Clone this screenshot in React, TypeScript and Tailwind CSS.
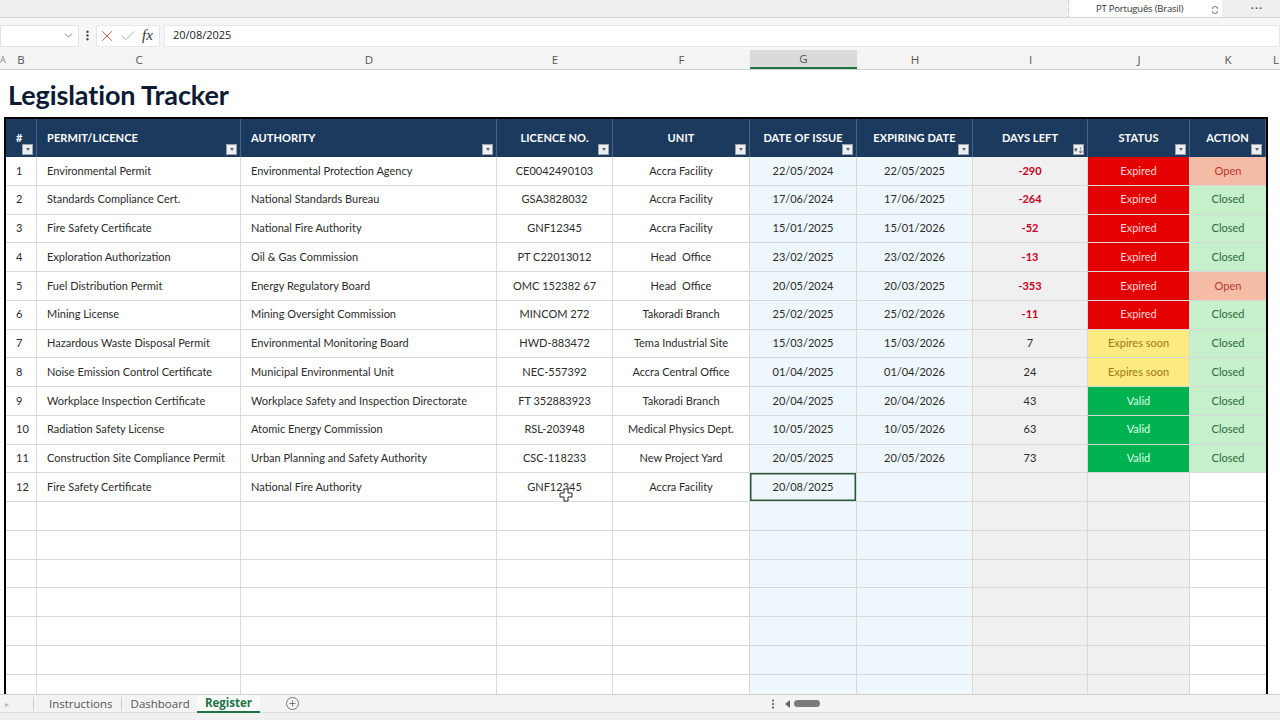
import { Check, ChevronDown, EllipsisVertical, Plus, X } from "lucide-react";

type Row = {
  n: number;
  permit: string;
  authority: string;
  licence: string;
  unit: string;
  issued: string;
  expires: string;
  days: number | null;
  status: "Expired" | "Expires soon" | "Valid" | null;
  action: "Open" | "Closed" | null;
};

const rows: Row[] = [
  { n: 1, permit: "Environmental Permit", authority: "Environmental Protection Agency", licence: "CE0042490103", unit: "Accra Facility", issued: "22/05/2024", expires: "22/05/2025", days: -290, status: "Expired", action: "Open" },
  { n: 2, permit: "Standards Compliance Cert.", authority: "National Standards Bureau", licence: "GSA3828032", unit: "Accra Facility", issued: "17/06/2024", expires: "17/06/2025", days: -264, status: "Expired", action: "Closed" },
  { n: 3, permit: "Fire Safety Certificate", authority: "National Fire Authority", licence: "GNF12345", unit: "Accra Facility", issued: "15/01/2025", expires: "15/01/2026", days: -52, status: "Expired", action: "Closed" },
  { n: 4, permit: "Exploration Authorization", authority: "Oil & Gas Commission", licence: "PT C22013012", unit: "Head\u00a0 Office", issued: "23/02/2025", expires: "23/02/2026", days: -13, status: "Expired", action: "Closed" },
  { n: 5, permit: "Fuel Distribution Permit", authority: "Energy Regulatory Board", licence: "OMC 152382 67", unit: "Head\u00a0 Office", issued: "20/05/2024", expires: "20/03/2025", days: -353, status: "Expired", action: "Open" },
  { n: 6, permit: "Mining License", authority: "Mining Oversight Commission", licence: "MINCOM 272", unit: "Takoradi Branch", issued: "25/02/2025", expires: "25/02/2026", days: -11, status: "Expired", action: "Closed" },
  { n: 7, permit: "Hazardous Waste Disposal Permit", authority: "Environmental Monitoring Board", licence: "HWD-883472", unit: "Tema Industrial Site", issued: "15/03/2025", expires: "15/03/2026", days: 7, status: "Expires soon", action: "Closed" },
  { n: 8, permit: "Noise Emission Control Certificate", authority: "Municipal Environmental Unit", licence: "NEC-557392", unit: "Accra Central Office", issued: "01/04/2025", expires: "01/04/2026", days: 24, status: "Expires soon", action: "Closed" },
  { n: 9, permit: "Workplace Inspection Certificate", authority: "Workplace Safety and Inspection Directorate", licence: "FT 352883923", unit: "Takoradi Branch", issued: "20/04/2025", expires: "20/04/2026", days: 43, status: "Valid", action: "Closed" },
  { n: 10, permit: "Radiation Safety License", authority: "Atomic Energy Commission", licence: "RSL-203948", unit: "Medical Physics Dept.", issued: "10/05/2025", expires: "10/05/2026", days: 63, status: "Valid", action: "Closed" },
  { n: 11, permit: "Construction Site Compliance Permit", authority: "Urban Planning and Safety Authority", licence: "CSC-118233", unit: "New Project Yard", issued: "20/05/2025", expires: "20/05/2026", days: 73, status: "Valid", action: "Closed" },
  { n: 12, permit: "Fire Safety Certificate", authority: "National Fire Authority", licence: "GNF12345", unit: "Accra Facility", issued: "20/08/2025", expires: "", days: null, status: null, action: null },
];

const statusClass: Record<string, string> = {
  Expired: "bg-[#e50000] text-[#ffd9d9]",
  "Expires soon": "bg-[#fdeb82] text-[#a07a12]",
  Valid: "bg-[#00b350] text-[#dcffe6]",
};

const actionClass: Record<string, string> = {
  Open: "bg-[#f4bba5] text-[#b8392c]",
  Closed: "bg-[#c6f0cb] text-[#2f6a37]",
};

const letters = [
  { l: "B", w: "w-[32px]", align: "justify-center" },
  { l: "C", w: "w-[204px]", align: "justify-center" },
  { l: "D", w: "w-[256px]", align: "justify-center" },
  { l: "E", w: "w-[116px]", align: "justify-center" },
  { l: "F", w: "w-[137px]", align: "justify-center" },
  { l: "G", w: "w-[107px]", align: "justify-center" },
  { l: "H", w: "w-[116px]", align: "justify-center" },
  { l: "I", w: "w-[115px]", align: "justify-center" },
  { l: "J", w: "w-[102px]", align: "justify-center" },
  { l: "K", w: "w-[76px]", align: "justify-center" },
  { l: "L", w: "w-[14px]", align: "justify-end pr-[1px]" },
];

const cell = "h-full shrink-0 flex items-center border-r border-b border-[#d9d9d9] truncate";

function FilterBtn({ sort }: { sort?: boolean }) {
  return (
    <span className="absolute right-[3px] bottom-[2px] flex h-[11px] w-[11px] items-center justify-center border border-[#9aa3ad] bg-[#eceff2]">
      {sort ? (
        <span className="text-[7px] leading-none text-[#555]">▾↓</span>
      ) : (
        <span className="block h-0 w-0 border-x-[2.5px] border-t-[3px] border-x-transparent border-t-[#666]" />
      )}
    </span>
  );
}

function HeadCell({ label, w, left, sort }: { label: string; w: string; left?: boolean; sort?: boolean }) {
  return (
    <div
      className={`relative flex h-full shrink-0 items-center border-r border-[#4a6284] ${w} ${
        left ? "justify-start pl-[10px]" : "justify-center"
      }`}
    >
      <span className="text-[11px] font-bold tracking-[0.1px] text-white">{label}</span>
      <FilterBtn sort={sort} />
    </div>
  );
}

export default function App() {
  const empties = Array.from({ length: 7 });
  return (
    <div className="relative h-[720px] w-[1280px] overflow-hidden bg-white font-['Lato','Noto_Sans',sans-serif] text-[#2b2b2b]">
      {/* ribbon strip */}
      <div className="flex h-[18px] items-start justify-end border-b border-[#d6d6d6] bg-[#efefef] font-['Open_Sans',sans-serif]">
        <div className="flex h-[17px] w-[154px] items-center border-l border-dotted border-[#bdbdbd] bg-white pl-[27px] pr-[4px] pt-[2px]">
          <span className="text-[9.5px] tracking-[-0.2px] text-[#333]">PT Português (Brasil)</span>
          <span className="ml-auto flex flex-col gap-[2px]">
            <span className="block h-[3px] w-[6px] rounded-t-sm border border-b-0 border-[#888]" />
            <span className="block h-[3px] w-[6px] rounded-b-sm border border-t-0 border-[#888]" />
          </span>
        </div>
        <div className="flex h-[17px] w-[58px] items-center justify-center pl-[12px] text-[11px] font-bold tracking-[1px] text-[#555]">
          ···
        </div>
      </div>

      {/* formula bar */}
      <div className="flex h-[32px] items-center bg-[#f6f6f6] pt-[3px] font-['Open_Sans',sans-serif]">
        <div className="flex h-[22px] w-[79px] items-center justify-end border border-[#e2e2e2] bg-white pr-[3px]">
          <ChevronDown className="h-[13px] w-[13px] text-[#666]" strokeWidth={1.5} />
        </div>
        <EllipsisVertical className="ml-[2px] h-[13px] w-[13px] text-[#444]" strokeWidth={2.5} />
        <div className="ml-[2px] flex h-[22px] w-[64px] items-center gap-[3px] border border-[#e6e6e6] bg-white pl-[1px]">
          <X className="h-[18px] w-[18px] text-[#c64b4b]" strokeWidth={1.2} />
          <Check className="h-[18px] w-[18px] text-[#7cbf83]" strokeWidth={1.2} />
          <span className="ml-[2px] font-['Liberation_Serif',serif] text-[15px] italic leading-none text-[#333]">fx</span>
        </div>
        <div className="ml-[4px] flex h-[22px] flex-1 items-center border border-[#e6e6e6] bg-white pl-[8px] text-[11px] text-[#222]">
          20/08/2025
        </div>
      </div>

      {/* column letters */}
      <div className="flex h-[20px] border-b border-[#d4d4d4] bg-[#f4f4f4] font-['Open_Sans',sans-serif] text-[11.5px] text-[#555]">
        <div className="flex w-[5px] shrink-0 items-center overflow-visible">
          <span className="text-[9px] text-[#888]">A</span>
        </div>
        {letters.map((c) => (
          <div
            key={c.l}
            className={`flex shrink-0 items-center overflow-hidden ${c.w} ${c.align} ${
              c.l === "G" ? "border-b-2 border-[#217346] bg-[#dadada]" : ""
            }`}
          >
            {c.l}
          </div>
        ))}
      </div>

      {/* title */}
      <div className="h-[47px] pl-[8px] pt-[11px]">
        <h1 className="text-[27px] font-bold leading-[27px] tracking-[-0.1px] text-[#0d1a33]">
          Legislation Tracker
        </h1>
      </div>

      {/* table */}
      <div className="ml-[4px] h-[577px] w-[1264px] overflow-hidden border-x-2 border-t-2 border-black">
        <div className="flex h-[38px] bg-[#1c3a5e]">
          <HeadCell label="#" w="w-[31px]" left />
          <HeadCell label="PERMIT/LICENCE" w="w-[204px]" left />
          <HeadCell label="AUTHORITY" w="w-[256px]" left />
          <HeadCell label="LICENCE NO." w="w-[116px]" />
          <HeadCell label="UNIT" w="w-[137px]" />
          <HeadCell label="DATE OF ISSUE" w="w-[107px]" />
          <HeadCell label="EXPIRING DATE" w="w-[116px]" />
          <HeadCell label="DAYS LEFT" w="w-[115px]" sort />
          <HeadCell label="STATUS" w="w-[102px]" />
          <HeadCell label="ACTION" w="w-[76px]" />
        </div>

        <div className="text-[11px]">
          {rows.map((r) => (
            <div key={r.n} className="flex h-[28.75px]">
              <div className={`${cell} w-[31px] pl-[10px]`}>{r.n}</div>
              <div className={`${cell} w-[204px] pl-[10px]`}>{r.permit}</div>
              <div className={`${cell} w-[256px] pl-[10px]`}>{r.authority}</div>
              <div className={`${cell} w-[116px] justify-center`}>{r.licence}</div>
              <div className={`${cell} w-[137px] justify-center`}>{r.unit}</div>
              <div
                className={`${cell} w-[107px] justify-center bg-[#eef7fb] ${
                  r.n === 12 ? "shadow-[inset_0_0_0_1.5px_#2a5a3c]" : ""
                }`}
              >
                {r.issued}
              </div>
              <div className={`${cell} w-[116px] justify-center bg-[#eef7fb]`}>{r.expires}</div>
              <div
                className={`${cell} w-[115px] justify-center bg-[#f0f0f0] ${
                  r.days !== null && r.days < 0 ? "font-bold text-[#c8001e]" : ""
                }`}
              >
                {r.days ?? ""}
              </div>
              <div className={`${cell} w-[102px] justify-center ${r.status ? statusClass[r.status] : "bg-[#f0f0f0]"}`}>
                {r.status ?? ""}
              </div>
              <div className={`${cell} w-[76px] justify-center border-r-0 ${r.action ? actionClass[r.action] : "bg-white"}`}>
                {r.action ?? ""}
              </div>
            </div>
          ))}
          {empties.map((_, i) => (
            <div key={i} className="flex h-[28.75px]">
              <div className={`${cell} w-[31px]`} />
              <div className={`${cell} w-[204px]`} />
              <div className={`${cell} w-[256px]`} />
              <div className={`${cell} w-[116px]`} />
              <div className={`${cell} w-[137px]`} />
              <div className={`${cell} w-[107px] bg-[#eef7fb]`} />
              <div className={`${cell} w-[116px] bg-[#eef7fb]`} />
              <div className={`${cell} w-[115px] bg-[#f0f0f0]`} />
              <div className={`${cell} w-[102px] bg-[#f0f0f0]`} />
              <div className={`${cell} w-[76px] border-r-0`} />
            </div>
          ))}
        </div>
      </div>

      {/* sheet tabs */}
      <div className="flex h-[18px] items-center border-t border-[#cfcfcf] bg-[#f3f3f3] font-['Open_Sans',sans-serif] text-[11.5px] text-[#555]">
        <div className="flex w-[33px] items-center pl-[5px] text-[8px] text-[#bbb]">▸</div>
        <div className="flex h-[14px] items-center border-l border-[#cfcfcf] pl-[15px] pr-[8px]">Instructions</div>
        <div className="flex h-[14px] items-center border-l border-[#cfcfcf] pl-[9px] pr-[7px]">Dashboard</div>
        <div className="flex h-[18px] items-center border-b-2 border-[#217346] bg-[#fafafa] px-[8px] font-bold text-[#217346]">
          Register
        </div>
        <div className="ml-[26px] flex h-[13px] w-[13px] items-center justify-center rounded-full border border-[#777]">
          <Plus className="h-[9px] w-[9px] text-[#555]" strokeWidth={2} />
        </div>
        <EllipsisVertical className="ml-[468px] h-[12px] w-[12px] text-[#666]" strokeWidth={2.5} />
        <span className="ml-[6px] block h-0 w-0 border-y-[4px] border-r-[5px] border-y-transparent border-r-[#666]" />
        <span className="ml-[4px] block h-[7px] w-[26px] rounded-full bg-[#7a7a7a]" />
      </div>
      <div className="h-[8px] border-t border-[#dedede] bg-[#f0f0f0]" />

      {/* mouse cursor */}
      <svg className="absolute left-[559px] top-[488px]" width="14" height="14" viewBox="0 0 14 14">
        <path d="M5 1h4v4h4v4H9v4H5V9H1V5h4z" fill="#fff" stroke="#222" strokeWidth="1" />
      </svg>
    </div>
  );
}
